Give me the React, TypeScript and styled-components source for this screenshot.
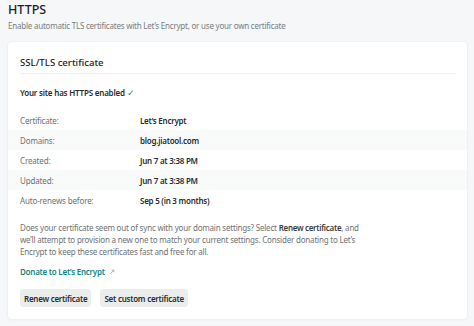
import React from "react";
import styled, { createGlobalStyle } from "styled-components";

const Global = createGlobalStyle`
  html, body { margin: 0; padding: 0; background: #f5f7f8; }
  body { font-family: "Noto Sans", "Open Sans", sans-serif; color: #2a2d30; }
  * { box-sizing: border-box; }
`;

const Page = styled.div`
  padding: 1px 7px 0 8px;
  width: 474px;
  height: 326px;
  overflow: hidden;
`;

const Heading = styled.h2`
  margin: 0;
  font-size: 12.5px;
  line-height: 18px;
  font-weight: 500;
  color: #1e2124;
`;

const Sub = styled.p`
  margin: 0;
  font-size: 8px;
  letter-spacing: -0.22px;
  line-height: 14px;
  color: #7a7d80;
`;

const Card = styled.section`
  margin-top: 9px;
  background: #fff;
  border-radius: 4px;
  box-shadow: 0 0 0 1px #eef0f1, 0 1px 3px rgba(0, 0, 0, 0.04);
  padding: 10px 0 12px;
  width: 459px;
`;

const CardTitle = styled.h3`
  margin: 0 11px 0 12px;
  font-size: 9.6px;
  line-height: 21px;
  font-weight: 500;
  color: #1e2124;
  border-bottom: 1px solid #eef0f1;
  height: 22px;
`;

const Status = styled.p`
  margin: 11px 12px 9px;
  font-size: 8px;
  letter-spacing: -0.2px;
  line-height: 16px;
  font-weight: 600;
  color: #2a2d30;
`;

const Check = styled.span`
  color: #13918a;
  font-weight: 400;
  font-size: 9px;
`;

const Rows = styled.dl`
  margin: 0;
`;

const Row = styled.div<{ $striped?: boolean }>`
  display: grid;
  grid-template-columns: 120px 1fr;
  align-items: center;
  height: 20px;
  padding: 0 12px;
  background: ${(p) => (p.$striped ? "#f9fafa" : "transparent")};
`;

const Label = styled.dt`
  font-size: 8px;
  letter-spacing: -0.15px;
  color: #6f7276;
`;

const Value = styled.dd`
  margin: 0;
  font-size: 8px;
  letter-spacing: -0.25px;
  font-weight: 600;
  color: #2a2d30;
`;

const Para = styled.p`
  margin: 12px 12px 0;
  font-size: 8px;
  letter-spacing: -0.2px;
  line-height: 12px;
  color: #6f7276;
  white-space: nowrap;
  b { font-weight: 600; color: #3a3d40; letter-spacing: -0.3px; }
`;

const Link = styled.a`
  display: flex;
  width: max-content;
  align-items: center;
  gap: 4px;
  margin: 8px 12px 0;
  font-size: 8px;
  letter-spacing: -0.25px;
  line-height: 12px;
  font-weight: 600;
  color: #14857e;
  text-decoration: none;
`;

const Actions = styled.div`
  display: flex;
  gap: 9px;
  margin: 11px 12px 0;
`;

const Button = styled.button`
  font-family: inherit;
  font-size: 8px;
  letter-spacing: -0.25px;
  font-weight: 600;
  color: #2a2d30;
  background: #ebecec;
  border: none;
  border-radius: 4px;
  height: 18px;
  padding: 0 4px;
`;

export default function App() {
  const rows: [string, string][] = [
    ["Certificate:", "Let\u2019s Encrypt"],
    ["Domains:", "blog.jiatool.com"],
    ["Created:", "Jun 7 at 3:38 PM"],
    ["Updated:", "Jun 7 at 3:38 PM"],
    ["Auto-renews before:", "Sep 5 (in 3 months)"],
  ];
  return (
    <Page>
      <Global />
      <Heading>HTTPS</Heading>
      <Sub>Enable automatic TLS certificates with Let’s Encrypt, or use your own certificate</Sub>
      <Card>
        <CardTitle>SSL/TLS certificate</CardTitle>
        <Status>
          Your site has HTTPS enabled <Check>✓</Check>
        </Status>
        <Rows>
          {rows.map(([l, v], i) => (
            <Row key={l} $striped={i % 2 === 1}>
              <Label>{l}</Label>
              <Value>{v}</Value>
            </Row>
          ))}
        </Rows>
        <Para>
          Does your certificate seem out of sync with your domain settings? Select <b>Renew certificate</b>, and
          <br />
          we’ll attempt to provision a new one to match your current settings. Consider donating to Let’s
          <br />
          Encrypt to keep these certificates fast and free for all.
        </Para>
        <Link href="#">
          Donate to Let’s Encrypt
          <svg width="6" height="6" viewBox="0 0 8 8" fill="none" stroke="#9aa0a4" strokeWidth="1">
            <path d="M1.5 6.5 L6.5 1.5 M3.5 1.5 H6.5 V4.5" />
          </svg>
        </Link>
        <Actions>
          <Button>Renew certificate</Button>
          <Button>Set custom certificate</Button>
        </Actions>
      </Card>
    </Page>
  );
}
